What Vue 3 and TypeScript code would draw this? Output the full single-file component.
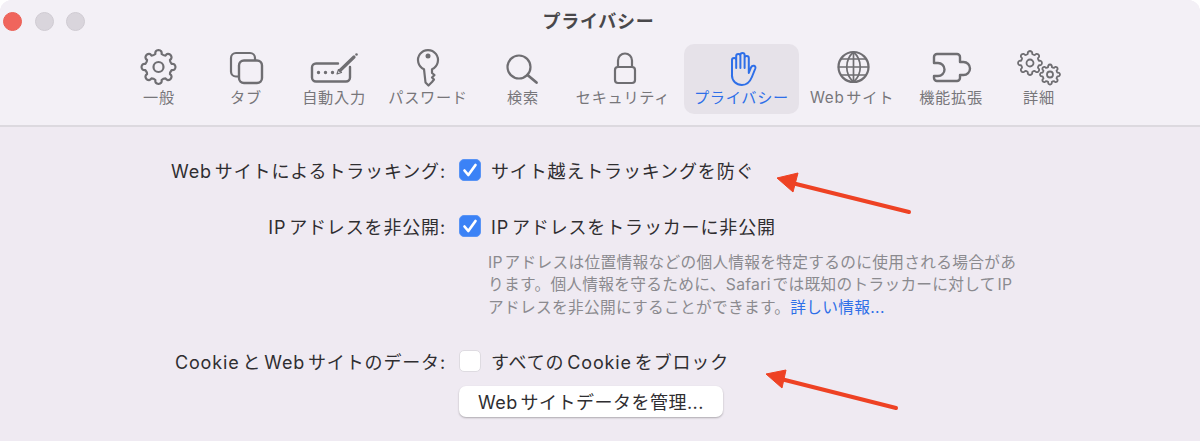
<script setup lang="ts">
interface Stroke { d: string; w?: number; c?: string }
interface Tab { label: string; width: number; center: number; strokes: Stroke[]; active?: boolean }

function circle(cx: number, cy: number, r: number): string {
  return `M${cx - r} ${cy}a${r} ${r} 0 1 0 ${2 * r} 0a${r} ${r} 0 1 0 ${-2 * r} 0`
}

function gear(cx: number, cy: number, outer: number, inner: number, teeth: number): string {
  const pts: string[] = []
  const step = (Math.PI * 2) / teeth
  for (let i = 0; i < teeth; i++) {
    const a = i * step - Math.PI / 2
    const p = (r: number, t: number) =>
      `${(cx + r * Math.cos(a + t * step)).toFixed(2)} ${(cy + r * Math.sin(a + t * step)).toFixed(2)}`
    pts.push(`${i === 0 ? 'M' : 'L'}${p(inner, -0.3)}`)
    pts.push(`Q${p(outer, -0.28)} ${p(outer, 0)}`)
    pts.push(`Q${p(outer, 0.28)} ${p(inner, 0.3)}`)
    pts.push(`Q${p(inner * 0.93, 0.5)} ${p(inner, 0.7)}`)
  }
  return pts.join('') + 'Z'
}

const tabs: Tab[] = [
  { label: '一般', width: 74, center: 159, strokes: [
    { d: gear(158.5, 67, 17, 13.4, 8) }, { d: circle(158.5, 67, 5) } ] },
  { label: 'タブ', width: 100, center: 246, strokes: [
    { d: 'M238 76.5h-2a5 5 0 0 1-5-5V58a5 5 0 0 1 5-5h14a5 5 0 0 1 5 5v2' },
    { d: 'M244 60.5h13a5 5 0 0 1 5 5V78a5 5 0 0 1-5 5h-13a5 5 0 0 1-5-5V65.5a5 5 0 0 1 5-5Z', w: 2.4 } ] },
  { label: '自動入力', width: 76, center: 334, strokes: [
    { d: 'M338 63.500h-22a4 4 0 0 0-4 4v10a4 4 0 0 0 4 4h30a4 4 0 0 0 4-4V67', w: 2.4 },
    { d: 'M318.500 72.500h.01M325.500 72.500h.01M332.500 72.500h.01', w: 3.4 },
    { d: 'M340 70.500l14-13.500', w: 3.2 },
    { d: 'M337 74l1.500-4.500 3 3Z', w: 1.2 },
    { d: 'M356.500 54.500h.01', w: 2.6 } ] },
  { label: 'パスワード', width: 112, center: 428, strokes: [
    { d: 'M424 69.2A10 10 0 1 1 432 69.2V73l2.500 2-2.500 2.500 2 2-2 2.500-3.500 3.500-3-3Z' },
    { d: 'M428 56h.01', w: 5 } ] },
  { label: '検索', width: 78, center: 523, strokes: [
    { d: circle(519, 67, 11.5) }, { d: 'M527.5 75l9 7.5', w: 2.8 } ] },
  { label: 'セキュリティ', width: 122, center: 623, strokes: [
    { d: 'M618 67a3 3 0 0 0-3 3v10a3 3 0 0 0 3 3h14a3 3 0 0 0 3-3V70a3 3 0 0 0-3-3Z' },
    { d: 'M618 67v-6.5a7 7 0 0 1 14 0V67' } ] },
  { label: 'プライバシー', width: 115, center: 741, active: true, strokes: [
    { d: 'M731 75V60a2.100 2.100 0 0 1 4.200 0v8M735.200 68V56a2.100 2.100 0 0 1 4.200 0v12M739.400 68V55a2.100 2.100 0 0 1 4.200 0v13M743.600 68V58a2.100 2.100 0 0 1 4.200 0v15l2.200-5.500c1.400-3 5.300-2 4.300 1l-3.400 8.500c-2 5-5 8-10 8-5.500 0-10-4-10-10', c: '#2e6fe8', w: 2 } ] },
  { label: 'Web サイト', width: 106, center: 852, strokes: [
    { d: circle(853.5, 67, 15) },
    { d: 'M853.5 52v30M838.5 67h30M841 59h25M841 75h25', w: 1.7 },
    { d: 'M853.5 52c-9 8-9 22 0 30M853.5 52c9 8 9 22 0 30', w: 1.7 } ] },
  { label: '機能拡張', width: 92, center: 951, strokes: [
    { d: 'M937 54H957a3 3 0 0 1 3 3V62h3.500a6.500 6.500 0 0 1 0 13H960V78a3 3 0 0 1-3 3H937a3 3 0 0 1-3-3V76h4a6.500 6.500 0 0 0 0-13h-4V57a3 3 0 0 1 3-3Z', w: 2.4 } ] },
  { label: '詳細', width: 84, center: 1039, strokes: [
    { d: gear(1030, 63, 12, 9.3, 8), w: 1.8 }, { d: circle(1030, 63, 3.5), w: 1.8 },
    { d: gear(1050, 74.5, 10, 7.7, 8), w: 1.8 }, { d: circle(1050, 74.5, 3), w: 1.8 } ] },
]

const viewBox = (t: Tab) => `${t.center - 32} 48 64 40`
</script>

<template>
  <div class="window">
    <header class="toolbar">
      <div class="lights">
        <span class="light close"></span>
        <span class="light"></span>
        <span class="light"></span>
      </div>
      <h1 class="title">プライバシー</h1>
      <nav class="tabs">
        <div
          v-for="t in tabs"
          :key="t.label"
          class="tab"
          :class="{ active: t.active }"
          :style="{ width: t.width + 'px' }"
        >
          <svg class="icon" :viewBox="viewBox(t)" width="64" height="40" fill="none">
            <path
              v-for="(s, i) in t.strokes"
              :key="i"
              :d="s.d"
              :stroke="s.c ?? '#6f6e72'"
              :stroke-width="s.w ?? 2.2"
              stroke-linecap="round"
              stroke-linejoin="round"
            />
          </svg>
          <span class="tab-label">{{ t.label }}</span>
        </div>
      </nav>
    </header>

    <main class="content">
      <div class="row row-first">
        <span class="label">Web サイトによるトラッキング:</span>
        <span class="box checked">
          <svg viewBox="0 0 22 22" width="22" height="22"><path d="M5.5 11.5l3.8 4.5 7.2-10" fill="none" stroke="#fff" stroke-width="2.7" stroke-linecap="round" stroke-linejoin="round" /></svg>
        </span>
        <span class="option">サイト越えトラッキングを防ぐ</span>
      </div>
      <div class="row row-second">
        <span class="label">IP アドレスを非公開:</span>
        <span class="box checked">
          <svg viewBox="0 0 22 22" width="22" height="22"><path d="M5.5 11.5l3.8 4.5 7.2-10" fill="none" stroke="#fff" stroke-width="2.7" stroke-linecap="round" stroke-linejoin="round" /></svg>
        </span>
        <span class="option">IP アドレスをトラッカーに非公開</span>
      </div>
      <p class="note">
        IP アドレスは位置情報などの個人情報を特定するのに使用される場合があ<br />ります。個人情報を守るために、Safari では既知のトラッカーに対して IP<br />アドレスを非公開にすることができます。<a class="more">詳しい情報...</a>
      </p>
      <div class="row row-third">
        <span class="label">Cookie と Web サイトのデータ:</span>
        <span class="box"></span>
        <span class="option">すべての Cookie をブロック</span>
      </div>
      <button class="manage" type="button">Web サイトデータを管理...</button>
    </main>

    <svg class="arrows" viewBox="0 0 1200 441" width="1200" height="441">
      <path d="M909 212L792 183" stroke="#ee4224" stroke-width="4" stroke-linecap="round" fill="none" />
      <path d="M777 178L798 173L793 192Z" fill="#ee4224" stroke="#ee4224" stroke-width="1" stroke-linejoin="round" />
      <path d="M896 408L781 379" stroke="#ee4224" stroke-width="4" stroke-linecap="round" fill="none" />
      <path d="M766 374L786 370L782 388Z" fill="#ee4224" stroke="#ee4224" stroke-width="1" stroke-linejoin="round" />
    </svg>
  </div>
</template>

<style>
html, body { margin: 0; background: #fff; }
</style>

<style scoped>
.window {
  position: relative;
  width: 1200px;
  height: 441px;
  overflow: hidden;
  border-radius: 12px 12px 0 0;
  background: #efeaf2;
  font-family: Inter, "Noto Sans CJK JP", sans-serif;
  color: #2f2e31;
  word-spacing: -3px;
}
.toolbar {
  position: relative;
  height: 127px;
  box-sizing: border-box;
  background: #f3f0f6;
  border-bottom: 2px solid #dcd9df;
  display: flex;
  flex-direction: column;
  align-items: center;
  padding-top: 9px;
}
.lights {
  position: absolute;
  top: 12px;
  left: 3px;
  display: flex;
  gap: 12.5px;
}
.light {
  width: 19px;
  height: 19px;
  box-sizing: border-box;
  border-radius: 50%;
  background: #d9d5dc;
  border: 1px solid #cfcbd2;
}
.light.close { background: #f0655c; border-color: #ea5f55; }
.title {
  margin: 0 3px 0 0;
  font-size: 18px;
  line-height: 25px;
  font-weight: 700;
  letter-spacing: 0.7px;
  color: #49484b;
}
.tabs {
  display: flex;
  align-self: flex-start;
  margin-left: 122px;
  margin-top: 10px;
}
.tab {
  height: 70px;
  display: flex;
  flex-direction: column;
  align-items: center;
  border-radius: 10px;
  white-space: nowrap;
  color: #77767a;
}
.tab.active { background: #e6e2e9; color: #2e6fe8; }
.icon { display: block; margin-top: 4px; flex: none; }
.tab-label {
  font-size: 15.2px;
  line-height: 20px;
  letter-spacing: 0.7px;
}
.content {
  display: flex;
  flex-direction: column;
  padding-left: 459px;
}
.row {
  display: flex;
  align-items: center;
  position: relative;
  height: 24px;
}
.row-first { margin-top: 31px; }
.row-second { margin-top: 32px; }
.row-third { margin-top: 30px; }
.label {
  position: absolute;
  right: calc(100% + 13px);
  white-space: nowrap;
  font-size: 18px;
  letter-spacing: 0.85px;
}
.box {
  width: 22px;
  height: 22px;
  box-sizing: border-box;
  border-radius: 5px;
  background: #fff;
  border: 1px solid #dedbe1;
  flex: none;
}
.box svg { display: block; margin: -1px; }
.box.checked { background: #3b82f6; border-color: #5a94f5; }
.option {
  margin-left: 10px;
  font-size: 18px;
  letter-spacing: 0.85px;
  white-space: nowrap;
}
.note {
  margin: 14px 0 0 29px;
  font-size: 15.7px;
  line-height: 22.3px;
  color: #8b8a8f;
  white-space: nowrap;
  letter-spacing: 0.3px;
}
.more { color: #2e6fe8; }
.manage {
  align-self: flex-start;
  width: 264px;
  height: 31px;
  margin-top: 13px;
  padding: 0;
  border: 0;
  border-radius: 7px;
  background: #fff;
  box-shadow: 0 1px 2px rgba(0, 0, 0, 0.28);
  font: inherit;
  font-size: 18px;
  letter-spacing: 0.5px;
  word-spacing: -3px;
  color: #2f2e31;
}
.arrows { position: absolute; inset: 0; pointer-events: none; }
</style>
